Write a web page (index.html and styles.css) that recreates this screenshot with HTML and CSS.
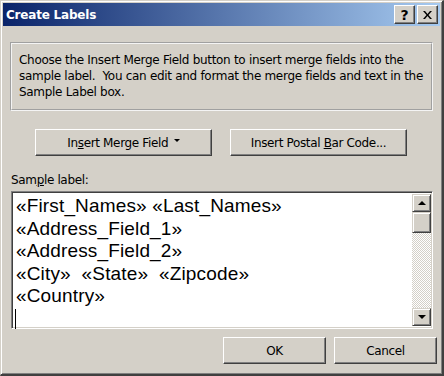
FILE: index.html
```html
<!DOCTYPE html>
<html>
<head>
    <link rel="stylesheet" href="styles.css">
</head>
<body>
    <div class="dialog">
        <div class="title-bar">
            <span class="title-text">Create Labels</span>
            <div class="title-buttons">
                <button class="caption-button">?</button>
                <button class="caption-button">
                    <svg width="9" height="8" viewBox="0 0 9 8">
                        <path d="M0 0h2l2.5 3 2.5-3h2l-3.5 4 3.5 4h-2l-2.5-3-2.5 3h-2l3.5-4z" fill="#000"/>
                    </svg>
                </button>
            </div>
        </div>

        <div class="dialog-body">
            <div class="info-box">
                Choose the Insert Merge Field button to insert merge fields into the
                sample label.&nbsp; You can edit and format the merge fields and text in the
                Sample Label box.
            </div>

            <div class="button-row">
                <button class="push-button wide">In<u>s</u>ert Merge Field <span class="drop-arrow"></span></button>
                <button class="push-button wide">Insert Postal <u>B</u>ar Code...</button>
            </div>

            <div class="field-label">Sam<u>p</u>le label:</div>

            <div class="sample-box">
                <div class="sample-text">
                    <div>«First_Names» «Last_Names»</div>
                    <div>«Address_Field_1»</div>
                    <div>«Address_Field_2»</div>
                    <div>«City»&nbsp; «State»&nbsp; «Zipcode»</div>
                    <div>«Country»</div>
                    <div><span class="caret"></span></div>
                </div>
                <div class="scrollbar">
                    <div class="scroll-button"><span class="arrow-up"></span></div>
                    <div class="scroll-thumb"></div>
                    <div class="scroll-track"></div>
                    <div class="scroll-button"><span class="arrow-down"></span></div>
                </div>
            </div>

            <div class="footer">
                <button class="push-button small">OK</button>
                <button class="push-button small">Cancel</button>
            </div>
        </div>
    </div>
</body>
</html>
```

FILE: styles.css
```css
/* Window frame */
body {
    margin: 0;
    background-color: #d4d0c8;
    font-family: "DejaVu Sans", Verdana, sans-serif;
    font-size: 12px;
    color: #000;
}

.dialog {
    width: 444px;
    height: 376px;
    box-sizing: border-box;
    background-color: #d4d0c8;
    border-style: solid;
    border-width: 1px 2px 2px 1px;
    border-color: #d4d0c8 #404040 #404040 #d4d0c8;
    box-shadow: inset 1px 1px 0 #fff, inset -1px -1px 0 #808080;
    padding: 2px;
}

/* Title bar */
.title-bar {
    height: 23px;
    display: flex;
    align-items: center;
    justify-content: space-between;
    background: linear-gradient(to right, #0a246a, #a6caf0);
    padding: 0 2px 0 3px;
}

.title-text {
    color: #fff;
    font-weight: bold;
    font-size: 12px;
    letter-spacing: -0.2px;
}

.title-buttons {
    display: flex;
    gap: 2px;
}

.caption-button {
    width: 21px;
    height: 19px;
    padding: 0;
    display: flex;
    align-items: center;
    justify-content: center;
    background-color: #d4d0c8;
    border: 1px solid;
    border-color: #fff #404040 #404040 #fff;
    box-shadow: inset -1px -1px 0 #808080;
    font-family: "DejaVu Sans", sans-serif;
    font-weight: bold;
    font-size: 14px;
    color: #000;
}

/* Dialog content */
.dialog-body {
    padding: 16px 7px 0 7px;
}

.info-box {
    height: 57px;
    padding: 8px 6px 0 7px;
    border: 2px groove #f4f4f4;
    line-height: 16px;
    letter-spacing: -0.3px;
}

.button-row {
    display: flex;
    gap: 18px;
    margin: 18px 0 0 25px;
}

.push-button {
    height: 27px;
    padding: 0;
    background-color: #d4d0c8;
    border: 1px solid;
    border-color: #fff #404040 #404040 #fff;
    box-shadow: inset -1px -1px 0 #808080;
    font-family: "DejaVu Sans", sans-serif;
    font-size: 12px;
    letter-spacing: -0.35px;
    color: #000;
}

.push-button.wide {
    width: 177px;
}

.drop-arrow {
    display: inline-block;
    vertical-align: middle;
    margin: 0 0 6px 2px;
    border-left: 3px solid transparent;
    border-right: 3px solid transparent;
    border-top: 3px solid #000;
}

.field-label {
    margin: 17px 0 0 1px;
    letter-spacing: -0.35px;
    line-height: 15px;
}

/* Sample label edit box */
.sample-box {
    margin: 3px 0 0 1px;
    height: 138px;
    box-sizing: border-box;
    display: flex;
    background-color: #fff;
    border-style: solid;
    border-width: 1px;
    border-color: #808080 #fff #fff #808080;
    box-shadow: inset 1px 1px 0 #404040, inset -1px -1px 0 #d4d0c8;
    padding: 2px 1px 2px 2px;
}

.sample-text {
    flex: 1;
    padding: 1px 0 0 2px;
    font-family: "Liberation Sans", Arial, sans-serif;
    font-size: 19px;
    line-height: 22.5px;
    letter-spacing: 0.15px;
}

.caret {
    display: inline-block;
    width: 1px;
    height: 20px;
    margin-left: -1px;
    background-color: #000;
    vertical-align: middle;
}

.scrollbar {
    width: 19px;
    display: flex;
    flex-direction: column;
}

.scroll-button,
.scroll-thumb {
    box-sizing: border-box;
    height: 18px;
    background-color: #d4d0c8;
    border: 1px solid;
    border-color: #d4d0c8 #404040 #404040 #d4d0c8;
    box-shadow: inset 1px 1px 0 #fff, inset -1px -1px 0 #808080;
    display: flex;
    align-items: center;
    justify-content: center;
}

.scroll-thumb {
    height: 21px;
}

.scroll-track {
    flex: 1;
    background-color: #fff;
    background-image: repeating-conic-gradient(#d4d0c8 0 25%, #fff 0 50%);
    background-size: 2px 2px;
}

.arrow-up {
    border-left: 4px solid transparent;
    border-right: 4px solid transparent;
    border-bottom: 4px solid #000;
}

.arrow-down {
    border-left: 4px solid transparent;
    border-right: 4px solid transparent;
    border-top: 4px solid #000;
}

/* Bottom buttons */
.footer {
    display: flex;
    justify-content: flex-end;
    gap: 8px;
    margin-top: 8px;
    margin-right: -4px;
}

.push-button.small {
    width: 103px;
}
```
